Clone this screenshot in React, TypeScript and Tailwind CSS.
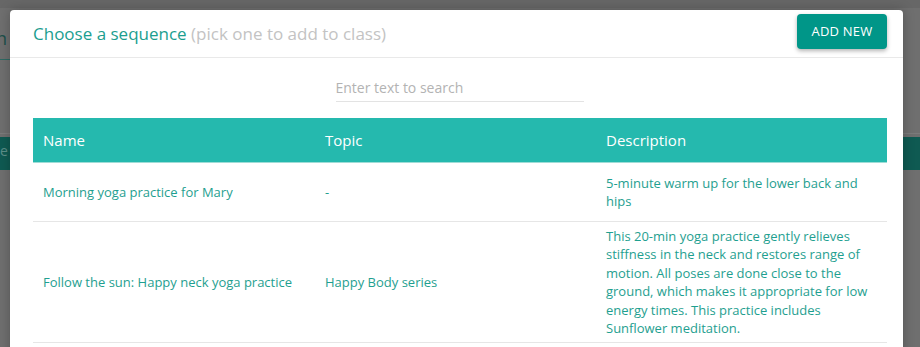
import React from 'react';

interface Sequence {
  name: string;
  topic: string;
  description: string;
}

const sequences: Sequence[] = [
  {
    name: 'Morning yoga practice for Mary',
    topic: '-',
    description: '5-minute warm up for the lower back and hips'
  },
  {
    name: 'Follow the sun: Happy neck yoga practice',
    topic: 'Happy Body series',
    description:
      'This 20-min yoga practice gently relieves stiffness in the neck and restores range of motion. All poses are done close to the ground, which makes it appropriate for low energy times. This practice includes Sunflower meditation.'
  }
];

export default function App() {
  return (
    <div
      className="relative h-[347px] w-[920px] overflow-hidden bg-[#6f6f6f]"
      style={{ fontFamily: '"Open Sans", "Noto Sans", sans-serif' }}
    >
      {/* page behind the overlay */}
      <div className="absolute left-0 top-0 h-[8px] w-full bg-[#676767]" />
      <div className="absolute left-[-4px] top-[26px] text-[18px] leading-[24px] text-[#1d4f4a]">n</div>
      <div className="absolute left-0 top-[59px] h-[1px] w-[10px] bg-[#2f6a64]" />
      <div className="absolute left-0 top-[133px] h-[1px] w-full bg-[#7b7b7b]" />
      <div className="absolute left-0 top-[137px] h-[33px] w-full bg-[#0f5a52]" />
      <div className="absolute left-0 top-[141px] text-[14px] leading-[20px] text-[#5d8f89]">e</div>

      {/* modal */}
      <div className="relative ml-[10px] mt-[10px] w-[893px] rounded-t-[4px] bg-white pb-[20px] shadow-[0_0_12px_rgba(0,0,0,0.25)]">
        <div className="flex h-[48px] items-center justify-between border-b border-[#e9e9e9] pl-[23px] pr-[16px]">
          <h2 className="text-[17px] leading-[24px] text-[#1b9e8f]">
            Choose a sequence <span className="text-[#c3c3c3]">(pick one to add to class)</span>
          </h2>
          <button className="mt-[-4px] h-[35px] w-[90px] rounded-[4px] bg-[#009688] text-[13px] tracking-[0.2px] text-white shadow-[0_2px_4px_rgba(0,0,0,0.3)]">
            ADD NEW
          </button>
        </div>

        <div className="pl-[23px] pr-[16px] pt-[18px]">
          <div className="flex justify-center pr-[2px]">
            <input
              type="text"
              placeholder="Enter text to search"
              className="ml-[1px] h-[26px] w-[248px] border-b border-[#e3e3e3] bg-transparent pb-[2px] text-[14px] text-[#555] outline-none placeholder:text-[#b3b3b3]"
            />
          </div>

          <div className="mt-[16px] w-[854px]">
            <div className="grid h-[45px] grid-cols-[282px_281px_1fr] items-center border-b border-[#9fdcd6] bg-[#25b9ae] text-[15px] text-white">
              <div className="px-[10px]">Name</div>
              <div className="px-[10px]">Topic</div>
              <div className="px-[10px]">Description</div>
            </div>
            {sequences.map((s) => (
              <div
                key={s.name}
                className="grid min-h-[59px] grid-cols-[282px_281px_1fr] items-center border-b border-[#e6e6e6] py-[5px] text-[13px] leading-[18.4px] text-[#1fa090]"
              >
                <div className="px-[10px]">{s.name}</div>
                <div className="px-[10px]">{s.topic}</div>
                <div className="px-[10px]">{s.description}</div>
              </div>
            ))}
          </div>
        </div>
      </div>
    </div>
  );
}
